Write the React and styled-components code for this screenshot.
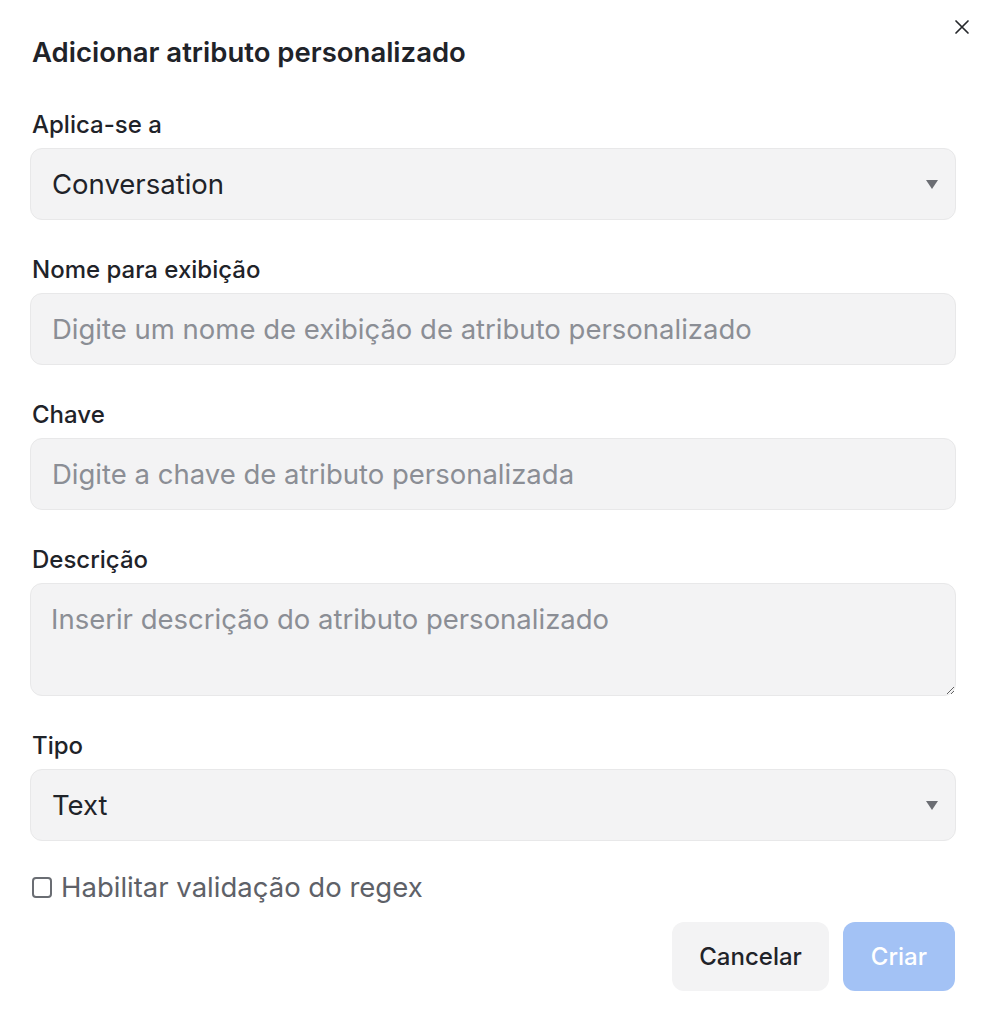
import styled, { createGlobalStyle } from "styled-components";

const GlobalStyle = createGlobalStyle`
    body {
        margin: 0;
        background: #ffffff;
        font-family: Inter, "Noto Sans", sans-serif;
        color: #1f2329;
    }
`;

const Dialog = styled.div`
    position: relative;
    width: 995px;
    min-height: 1024px;
    box-sizing: border-box;
    padding: 36px 39px 0 30px;
    display: flex;
    flex-direction: column;
`;

const CloseButton = styled.button`
    position: absolute;
    top: 16px;
    right: 22px;
    width: 22px;
    height: 22px;
    padding: 0;
    border: none;
    background: transparent;
    display: flex;
    align-items: center;
    justify-content: center;
    color: #26282c;
`;

const Title = styled.h2`
    margin: 0 0 45px 2px;
    font-size: 27.5px;
    line-height: 32px;
    font-weight: 600;
    color: #1f2329;
`;

const Field = styled.div`
    display: flex;
    flex-direction: column;
    gap: 11px;
    margin-bottom: 38px;
`;

const Label = styled.label`
    margin-left: 2px;
    font-size: 24px;
    line-height: 24px;
    font-weight: 500;
    color: #1f2329;
`;

const SelectWrap = styled.div`
    position: relative;
    height: 72px;
`;

const Select = styled.select`
    appearance: none;
    width: 100%;
    height: 100%;
    box-sizing: border-box;
    padding: 0 21px;
    border: 1px solid #e8e8e9;
    border-radius: 12px;
    background: #f3f3f4;
    font-family: inherit;
    font-size: 27.5px;
    color: #1f2329;
    outline: none;
`;

const Caret = styled.span`
    position: absolute;
    right: 18px;
    top: 50%;
    margin-top: -4px;
    width: 0;
    height: 0;
    border-left: 6px solid transparent;
    border-right: 6px solid transparent;
    border-top: 9px solid #6b6d73;
    pointer-events: none;
`;

const Input = styled.input`
    height: 72px;
    box-sizing: border-box;
    padding: 0 21px;
    border: 1px solid #e8e8e9;
    border-radius: 12px;
    background: #f3f3f4;
    font-family: inherit;
    font-size: 27.5px;
    color: #1f2329;
    outline: none;
    &::placeholder {
        color: #8b8e95;
    }
`;

const TextArea = styled.textarea`
    height: 113px;
    box-sizing: border-box;
    padding: 18px 20px;
    border: 1px solid #e8e8e9;
    border-radius: 12px;
    background: #f3f3f4;
    font-family: inherit;
    font-size: 27.5px;
    line-height: 34px;
    color: #1f2329;
    resize: vertical;
    outline: none;
    &::placeholder {
        color: #8b8e95;
    }
`;

const CheckRow = styled.label`
    display: flex;
    align-items: center;
    gap: 9px;
    margin: -7px 0 20px 2px;
    font-size: 27.5px;
    line-height: 30px;
    color: #5e6168;
`;

const Check = styled.span`
    width: 20px;
    height: 21px;
    border: 2px solid #6a6d73;
    border-radius: 4px;
    box-sizing: border-box;
    flex-shrink: 0;
`;

const Footer = styled.div`
    display: flex;
    justify-content: flex-end;
    gap: 14px;
    margin-right: 1px;
`;

const Button = styled.button`
    height: 69px;
    padding: 0 ${p => (p.$primary ? "28px" : "27px")};
    border: none;
    border-radius: 12px;
    background: ${p => (p.$primary ? "#a3c2f5" : "#f3f3f4")};
    color: ${p => (p.$primary ? "#ffffff" : "#1f2329")};
    font-family: inherit;
    font-size: 24px;
    font-weight: 500;
`;

const CloseIcon = () => (
    <svg width="16" height="16" viewBox="0 0 16 16" fill="none">
        <path d="M2 2 L14 14 M14 2 L2 14" stroke="currentColor" strokeWidth="1.7" strokeLinecap="round" />
    </svg>
);

const App = () => {
    return (
        <Dialog>
            <GlobalStyle />
            <CloseButton aria-label="Fechar"><CloseIcon /></CloseButton>
            <Title>Adicionar atributo personalizado</Title>

            <Field>
                <Label>Aplica-se a</Label>
                <SelectWrap>
                    <Select defaultValue="conversation">
                        <option value="conversation">Conversation</option>
                        <option value="contact">Contact</option>
                    </Select>
                    <Caret />
                </SelectWrap>
            </Field>

            <Field>
                <Label>Nome para exibição</Label>
                <Input placeholder="Digite um nome de exibição de atributo personalizado" />
            </Field>

            <Field>
                <Label>Chave</Label>
                <Input placeholder="Digite a chave de atributo personalizada" />
            </Field>

            <Field>
                <Label>Descrição</Label>
                <TextArea placeholder="Inserir descrição do atributo personalizado" />
            </Field>

            <Field>
                <Label>Tipo</Label>
                <SelectWrap>
                    <Select defaultValue="text">
                        <option value="text">Text</option>
                        <option value="number">Number</option>
                    </Select>
                    <Caret />
                </SelectWrap>
            </Field>

            <CheckRow>
                <Check />
                Habilitar validação do regex
            </CheckRow>

            <Footer>
                <Button>Cancelar</Button>
                <Button $primary>Criar</Button>
            </Footer>
        </Dialog>
    );
};

export default App;
